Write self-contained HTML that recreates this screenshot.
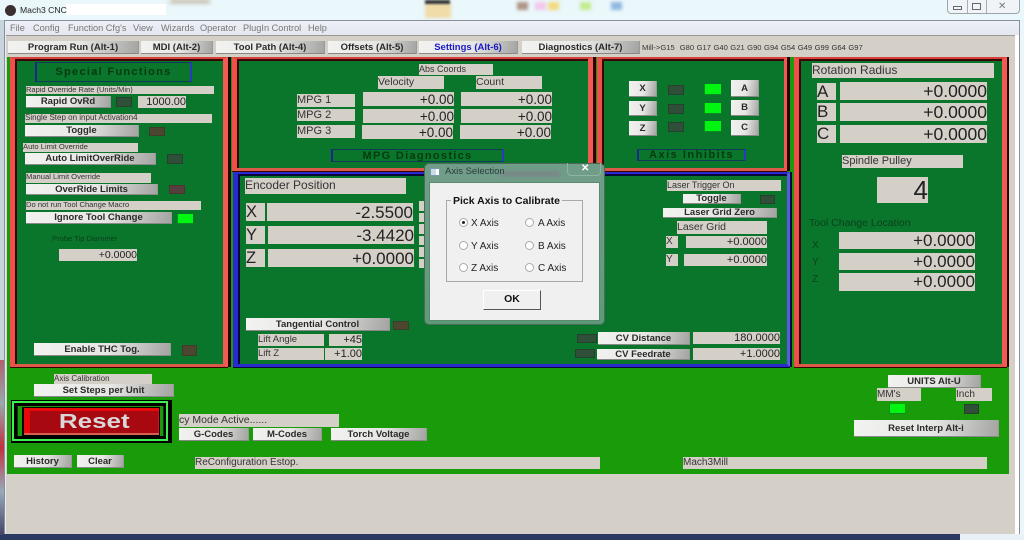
<!DOCTYPE html>
<html><head><meta charset="utf-8"><title>Mach3 CNC</title>
<style>
html,body{margin:0;padding:0;width:1024px;height:540px;overflow:hidden;background:#eef8fb}
#w{position:absolute;left:0;top:0;width:1024px;height:540px;overflow:hidden;filter:blur(.35px);font-family:"Liberation Sans",sans-serif}
#w div,#w span.a{position:absolute;box-sizing:border-box;white-space:nowrap}
.l{background:#d4d0c8;color:#333;overflow:hidden;font-size:11px;line-height:1}
.r{text-align:right;color:#222}
#w .b{background:linear-gradient(100deg,#f2f2f0 0%,#e6e6e4 55%,#a4a4a2 100%);color:#2a2a2a;font-weight:bold;font-size:9.5px;display:flex;align-items:center;justify-content:center;border-bottom:1px solid #888;border-right:1px solid #999}
.o{background:#2f4f38;border:1px solid #26402e}
.n{background:#00f510;border-bottom:1px solid #0a8a20;border-left:1px solid #0a8a20}
.p{background:#0a762c;border-style:solid;border-color:#d8403a #f25a54 #dc5a48 #f0504c;border-width:2px 5px 3px 5px;box-shadow:inset 2px 2px 0 #3a0505,3px 0 0 #2a0000,0 1px 0 #3a0000}
.t{color:#0a3f1c;font-size:9px;line-height:1}
.h{background:#0a762c;color:#063a10;font-weight:bold;text-align:center;font-size:11px;letter-spacing:1.3px;border:1px solid #123a5a;border-left:2px solid #1a2a90;border-right:2px solid #2a3ac0}
.rd{width:9px;height:9px;border-radius:50%;background:#fff;border:1px solid #aaa}
.dl{font-size:10px;color:#222;line-height:1}
</style></head><body><div id="w">

<!-- top desktop strip -->
<div style="left:0;top:0;width:1024px;height:20px;background:#eaf7fb"></div>
<div style="left:170px;top:0;width:40px;height:3px;background:#b8a890;filter:blur(2px)"></div>
<div style="left:425px;top:3px;width:26px;height:15px;background:#f0dca8;filter:blur(1.5px)"></div>
<div style="left:425px;top:0;width:25px;height:4px;background:#333;filter:blur(1px)"></div>
<div style="left:517px;top:2px;width:11px;height:8px;background:#b09488;filter:blur(1.5px)"></div>
<div style="left:535px;top:2px;width:11px;height:8px;background:#f4c8ec;filter:blur(1.5px)"></div>
<div style="left:548px;top:2px;width:11px;height:8px;background:#f2dc80;filter:blur(1.5px)"></div>
<div style="left:580px;top:2px;width:11px;height:8px;background:#c4ec90;filter:blur(1.5px)"></div>
<div style="left:611px;top:2px;width:11px;height:8px;background:#90b8e0;filter:blur(1.5px)"></div>
<div style="left:66px;top:4px;width:100px;height:11px;background:#fff"></div>
<div style="left:5px;top:5px;width:11px;height:11px;border-radius:50%;background:#3a3030"></div>
<div style="left:20px;top:4px;font-size:8.6px;color:#222;line-height:12px">Mach3 CNC</div>
<!-- window buttons -->
<div style="left:947px;top:-1px;width:73px;height:15px;background:#f0f4f6;border:1px solid #9aa6b0;border-radius:0 0 4px 4px"></div>
<div style="left:967px;top:0;width:1px;height:13px;background:#aab"></div>
<div style="left:986px;top:0;width:1px;height:13px;background:#aab"></div>
<div style="left:953px;top:6px;width:9px;height:4px;border:1px solid #667"></div>
<div style="left:972px;top:3px;width:9px;height:7px;border:1px solid #667"></div>
<div style="left:998px;top:1px;font-size:10px;color:#778;line-height:12px">&#10005;</div>

<!-- window frame -->
<div style="left:0;top:20px;width:5px;height:520px;background:#c8d4dc"></div>
<div style="left:4px;top:20px;width:1016px;height:520px;background:#e8eaf2;border:1px solid #8a8f9a;border-bottom:none"></div>
<div style="left:5px;top:21px;width:1014px;height:14px;background:linear-gradient(#eef0f8,#e4e6f0);color:#777;font-size:9.2px;line-height:14px">
<span class="a" style="left:5px">File</span><span class="a" style="left:28px">Config</span><span class="a" style="left:63px">Function Cfg's</span><span class="a" style="left:128px">View</span><span class="a" style="left:156px">Wizards</span><span class="a" style="left:195px">Operator</span><span class="a" style="left:238px">PlugIn Control</span><span class="a" style="left:303px">Help</span></div>
<div style="left:6px;top:35px;width:1009px;height:499px;background:#d4d0c8;border-top:1px solid #999"></div>
<div style="left:1015px;top:35px;width:4px;height:499px;background:#fff"></div>
<div style="left:0;top:534px;width:960px;height:6px;background:#2a3a60"></div>
<div style="left:960px;top:534px;width:64px;height:6px;background:#e8f2f6"></div>
<div style="left:0;top:360px;width:4px;height:175px;background:linear-gradient(#b06070,#9aa,#c03040,#9ab,#446)"></div>
<div style="left:1020px;top:20px;width:4px;height:515px;background:#eaf6fa"></div>

<!-- tabs -->
<div class="b" style="left:8px;top:41px;width:131px;height:13px">Program Run (Alt-1)</div>
<div class="b" style="left:141px;top:41px;width:72px;height:13px">MDI (Alt-2)</div>
<div class="b" style="left:216px;top:41px;width:109px;height:13px">Tool Path (Alt-4)</div>
<div class="b" style="left:328px;top:41px;width:89px;height:13px">Offsets (Alt-5)</div>
<div class="b" style="left:419px;top:41px;width:99px;height:13px;color:#1a1ac8">Settings (Alt-6)</div>
<div class="b" style="left:522px;top:41px;width:118px;height:13px">Diagnostics (Alt-7)</div>
<div style="left:642px;top:43px;font-size:7.6px;color:#333;line-height:9px;word-spacing:.4px">Mill-&gt;G15&nbsp; G80 G17 G40 G21 G90 G94 G54 G49 G99 G64 G97</div>

<!-- bright green base -->
<div style="left:7px;top:57px;width:1002px;height:417px;background:#1a9c0a"></div>

<!-- panels -->
<div class="p" style="left:10px;top:57px;width:218px;height:310px"></div>
<div class="p" style="left:232px;top:57px;width:361px;height:114px"></div>
<div class="p" style="left:597px;top:57px;width:190px;height:114px;border-right-width:3px"></div>
<div class="p" style="left:233px;top:172px;width:557px;height:195px;border-width:2px 3px 3px 5px;border-color:#2a2ad0 #5a5ae0 #2a2ad0 #2a2ad0;box-shadow:inset 2px 2px 0 #08083a,2px 0 0 #08083a,0 1px 0 #08083a"></div>
<div class="p" style="left:794px;top:57px;width:213px;height:310px;box-shadow:inset 2px 2px 0 #3a0505,2px 0 0 #2a0000,0 1px 0 #3a0000"></div>

<!-- panel 1 -->
<div class="h" style="left:35px;top:62px;width:157px;height:20px;line-height:18px">Special Functions</div>
<div class="l" style="left:26px;top:86px;width:188px;height:8px;font-size:7.5px">Rapid Override Rate (Units/Min)</div>
<div class="b" style="left:26px;top:96px;width:85px;height:12px">Rapid OvRd</div>
<div class="o" style="left:116px;top:97px;width:16px;height:10px"></div>
<div class="l r" style="left:138px;top:96px;width:48px;height:12px;font-size:11px;line-height:12px">1000.00</div>
<div class="l" style="left:25px;top:114px;width:187px;height:9px;font-size:8px">Single Step on input Activation4</div>
<div class="b" style="left:25px;top:125px;width:114px;height:12px">Toggle</div>
<div class="o" style="left:149px;top:127px;width:16px;height:9px;background:#4a4630;border-color:#3f3c2a"></div>
<div class="l" style="left:23px;top:143px;width:115px;height:9px;font-size:7.6px">Auto Limit Override</div>
<div class="b" style="left:25px;top:153px;width:131px;height:12px">Auto LimitOverRide</div>
<div class="o" style="left:167px;top:154px;width:16px;height:10px"></div>
<div class="l" style="left:26px;top:173px;width:125px;height:10px;font-size:7.6px">Manual Limit Override</div>
<div class="b" style="left:26px;top:184px;width:132px;height:11px">OverRide Limits</div>
<div class="o" style="left:169px;top:185px;width:16px;height:9px;background:#553f3c;border-color:#4a3533"></div>
<div class="l" style="left:26px;top:201px;width:175px;height:9px;font-size:7.6px">Do not run Tool Change Macro</div>
<div class="b" style="left:26px;top:212px;width:146px;height:12px">Ignore Tool Change</div>
<div class="n" style="left:177px;top:214px;width:16px;height:10px"></div>
<div class="t" style="left:52px;top:235px;font-size:7.6px">Probe Tip Diameter</div>
<div class="l r" style="left:59px;top:249px;width:78px;height:12px;font-size:10.5px;line-height:12px">+0.0000</div>
<div class="b" style="left:34px;top:343px;width:137px;height:13px">Enable THC Tog.</div>
<div class="o" style="left:182px;top:345px;width:15px;height:11px;background:#4a4630;border-color:#3f3c2a"></div>

<!-- panel 2 -->
<div class="l" style="left:419px;top:64px;width:74px;height:11px;font-size:9px;line-height:11px">Abs Coords</div>
<div class="l" style="left:378px;top:76px;width:66px;height:13px;font-size:10.5px;line-height:12px">Velocity</div>
<div class="l" style="left:476px;top:76px;width:66px;height:13px;font-size:10.5px;line-height:12px">Count</div>
<div class="l" style="left:297px;top:94px;width:58px;height:13px;font-size:11px;line-height:12px">MPG 1</div>
<div class="l" style="left:297px;top:109px;width:58px;height:12px;font-size:11px;line-height:12px">MPG 2</div>
<div class="l" style="left:297px;top:125px;width:58px;height:13px;font-size:11px;line-height:12px">MPG 3</div>
<div class="l r" style="left:363px;top:92px;width:91px;height:14px;font-size:13.5px;line-height:15px">+0.00</div>
<div class="l r" style="left:461px;top:92px;width:91px;height:14px;font-size:13.5px;line-height:15px">+0.00</div>
<div class="l r" style="left:363px;top:109px;width:91px;height:14px;font-size:13.5px;line-height:15px">+0.00</div>
<div class="l r" style="left:461px;top:109px;width:91px;height:14px;font-size:13.5px;line-height:15px">+0.00</div>
<div class="l r" style="left:362px;top:125px;width:91px;height:14px;font-size:13.5px;line-height:15px">+0.00</div>
<div class="l r" style="left:460px;top:125px;width:91px;height:14px;font-size:13.5px;line-height:15px">+0.00</div>
<div class="h" style="left:331px;top:149px;width:173px;height:13px;line-height:12px">MPG Diagnostics</div>

<!-- panel 3 -->
<div class="b" style="left:629px;top:81px;width:28px;height:16px">X</div>
<div class="b" style="left:629px;top:101px;width:28px;height:15px">Y</div>
<div class="b" style="left:629px;top:121px;width:28px;height:15px">Z</div>
<div class="o" style="left:668px;top:85px;width:16px;height:10px"></div>
<div class="o" style="left:668px;top:104px;width:16px;height:10px"></div>
<div class="o" style="left:668px;top:122px;width:16px;height:10px"></div>
<div class="n" style="left:704px;top:84px;width:17px;height:11px"></div>
<div class="n" style="left:704px;top:103px;width:17px;height:11px"></div>
<div class="n" style="left:704px;top:121px;width:17px;height:11px"></div>
<div class="b" style="left:731px;top:80px;width:28px;height:17px">A</div>
<div class="b" style="left:731px;top:100px;width:28px;height:16px">B</div>
<div class="b" style="left:731px;top:120px;width:28px;height:16px">C</div>
<div class="h" style="left:637px;top:149px;width:109px;height:12px;line-height:11px;letter-spacing:1.5px">Axis Inhibits</div>

<!-- panel 5 -->
<div class="l" style="left:812px;top:63px;width:182px;height:15px;font-size:12px;line-height:15px">Rotation Radius</div>
<div class="l" style="left:817px;top:83px;width:19px;height:17px;font-size:17px;line-height:17px;color:#222">A</div>
<div class="l r" style="left:840px;top:82px;width:147px;height:18px;font-size:17.5px;line-height:19px">+0.0000</div>
<div class="l" style="left:817px;top:103px;width:19px;height:18px;font-size:17px;line-height:18px;color:#222">B</div>
<div class="l r" style="left:840px;top:103px;width:147px;height:18px;font-size:17.5px;line-height:19px">+0.0000</div>
<div class="l" style="left:817px;top:125px;width:19px;height:18px;font-size:17px;line-height:18px;color:#222">C</div>
<div class="l r" style="left:840px;top:125px;width:147px;height:18px;font-size:17.5px;line-height:19px">+0.0000</div>
<div class="l" style="left:842px;top:155px;width:121px;height:13px;font-size:11px;line-height:13px">Spindle Pulley</div>
<div class="l r" style="left:877px;top:177px;width:51px;height:26px;font-size:26px;line-height:27px">4</div>
<div class="t" style="left:809px;top:218px;font-size:10.5px">Tool Change Location</div>
<div class="t" style="left:812px;top:241px;font-size:10px">X</div>
<div class="t" style="left:812px;top:258px;font-size:10px">Y</div>
<div class="t" style="left:812px;top:275px;font-size:10px">Z</div>
<div class="l r" style="left:839px;top:232px;width:136px;height:17px;font-size:17px;line-height:18px">+0.0000</div>
<div class="l r" style="left:839px;top:253px;width:136px;height:17px;font-size:17px;line-height:18px">+0.0000</div>
<div class="l r" style="left:839px;top:273px;width:136px;height:18px;font-size:17px;line-height:18px">+0.0000</div>

<!-- panel 4 -->
<div class="l" style="left:245px;top:178px;width:161px;height:16px;font-size:12px;line-height:15px">Encoder Position</div>
<div class="l" style="left:246px;top:203px;width:19px;height:18px;font-size:16.5px;line-height:18px;color:#222">X</div>
<div class="l r" style="left:267px;top:203px;width:146px;height:18px;font-size:17px;line-height:19px">-2.5500</div>
<div class="l" style="left:246px;top:226px;width:19px;height:18px;font-size:16.5px;line-height:18px;color:#222">Y</div>
<div class="l r" style="left:268px;top:226px;width:146px;height:18px;font-size:17px;line-height:19px">-3.4420</div>
<div class="l" style="left:246px;top:249px;width:19px;height:18px;font-size:16.5px;line-height:18px;color:#222">Z</div>
<div class="l r" style="left:268px;top:249px;width:146px;height:18px;font-size:17px;line-height:19px">+0.0000</div>
<div class="l" style="left:419px;top:201px;width:8px;height:10px"></div>
<div class="l" style="left:419px;top:213px;width:8px;height:9px"></div>
<div class="l" style="left:419px;top:224px;width:8px;height:10px"></div>
<div class="l" style="left:419px;top:236px;width:8px;height:9px"></div>
<div class="l" style="left:419px;top:247px;width:8px;height:10px"></div>
<div class="l" style="left:419px;top:259px;width:8px;height:9px"></div>
<div class="b" style="left:246px;top:318px;width:144px;height:13px">Tangential Control</div>
<div class="o" style="left:393px;top:321px;width:16px;height:9px;background:#4a4630;border-color:#3f3c2a"></div>
<div class="l" style="left:258px;top:334px;width:66px;height:12px;font-size:9.5px;line-height:12px">Lift Angle</div>
<div class="l r" style="left:329px;top:334px;width:33px;height:12px;font-size:11px;line-height:12px">+45</div>
<div class="l" style="left:258px;top:348px;width:66px;height:12px;font-size:9.5px;line-height:12px">Lift Z</div>
<div class="l r" style="left:325px;top:348px;width:37px;height:12px;font-size:11px;line-height:12px">+1.00</div>
<div class="o" style="left:577px;top:334px;width:20px;height:9px"></div>
<div class="b" style="left:598px;top:332px;width:92px;height:13px">CV Distance</div>
<div class="o" style="left:575px;top:349px;width:20px;height:9px"></div>
<div class="b" style="left:597px;top:349px;width:93px;height:11px">CV Feedrate</div>
<div class="l r" style="left:693px;top:332px;width:87px;height:12px;font-size:11px;line-height:12px">180.0000</div>
<div class="l r" style="left:693px;top:348px;width:87px;height:12px;font-size:11px;line-height:12px">+1.0000</div>
<div class="l" style="left:667px;top:180px;width:114px;height:11px;font-size:9px;line-height:11px">Laser Trigger On</div>
<div class="b" style="left:683px;top:194px;width:58px;height:10px">Toggle</div>
<div class="o" style="left:760px;top:195px;width:15px;height:9px"></div>
<div class="b" style="left:663px;top:208px;width:114px;height:10px">Laser Grid Zero</div>
<div class="l" style="left:677px;top:221px;width:90px;height:13px;font-size:10.5px;line-height:13px">Laser Grid</div>
<div class="l" style="left:666px;top:236px;width:12px;height:12px;font-size:10px;line-height:12px">X</div>
<div class="l r" style="left:686px;top:236px;width:81px;height:12px;font-size:11px;line-height:12px">+0.0000</div>
<div class="l" style="left:666px;top:254px;width:12px;height:12px;font-size:10px;line-height:12px">Y</div>
<div class="l r" style="left:684px;top:254px;width:83px;height:12px;font-size:11px;line-height:12px">+0.0000</div>

<!-- bottom -->
<div class="l" style="left:54px;top:374px;width:98px;height:10px;font-size:8px;line-height:10px">Axis Calibration</div>
<div class="b" style="left:34px;top:384px;width:140px;height:13px">Set Steps per Unit</div>
<div style="left:11px;top:400px;width:161px;height:43px;background:#000"></div>
<div style="left:12px;top:401px;width:156px;height:40px;border:2px solid #3cf050"></div>
<div style="left:16px;top:405px;width:149px;height:32px;background:#063a10;border:1px solid #000"></div>
<div style="left:18px;top:406px;width:145px;height:30px;background:#1a9c0a"></div>
<div style="left:22px;top:407px;width:138px;height:29px;background:#000"></div>
<div style="left:24px;top:408px;width:135px;height:27px;background:#e80a0a;border-bottom:2px solid #d86050"></div>
<div style="left:30px;top:411px;width:128px;height:22px;background:#a80810;color:#d8d8d8;font-size:20px;font-weight:bold;text-align:center;line-height:22px;overflow:hidden"><span style="display:inline-block;transform:scaleX(1.3)">Reset</span></div>
<div class="l" style="left:179px;top:414px;width:160px;height:13px;font-size:10.5px;line-height:12px">cy Mode Active......</div>
<div class="b" style="left:179px;top:428px;width:70px;height:13px">G-Codes</div>
<div class="b" style="left:253px;top:428px;width:69px;height:13px">M-Codes</div>
<div class="b" style="left:331px;top:428px;width:96px;height:13px">Torch Voltage</div>
<div class="b" style="left:14px;top:455px;width:58px;height:13px">History</div>
<div class="b" style="left:77px;top:455px;width:47px;height:13px">Clear</div>
<div class="l" style="left:195px;top:457px;width:405px;height:12px;font-size:10px;line-height:12px">ReConfiguration Estop.</div>
<div class="l" style="left:683px;top:457px;width:304px;height:12px;font-size:10px;line-height:12px">Mach3Mill</div>
<div class="b" style="left:888px;top:375px;width:93px;height:13px">UNITS Alt-U</div>
<div class="l" style="left:877px;top:388px;width:44px;height:13px;font-size:10px;line-height:13px">MM's</div>
<div class="l" style="left:956px;top:388px;width:36px;height:13px;font-size:10px;line-height:13px">Inch</div>
<div class="n" style="left:889px;top:404px;width:16px;height:10px"></div>
<div class="o" style="left:964px;top:404px;width:15px;height:10px"></div>
<div class="b" style="left:854px;top:420px;width:145px;height:17px">Reset Interp Alt-i</div>

<!-- dialog -->
<div style="left:424px;top:163px;width:181px;height:162px;background:linear-gradient(#6f9d88 0,#6f9d88 20px,#5f9a78 100%);border:1px solid #4a6a5a;border-radius:5px"></div>
<div style="left:500px;top:172px;width:60px;height:4px;background:#8a5f8a;opacity:.5;filter:blur(2px)"></div>
<div style="left:567px;top:163px;width:34px;height:13px;border:1px solid #8fb5a2;border-top:none;border-radius:0 0 4px 4px"></div>
<div style="left:581px;top:163px;font-size:10px;font-weight:bold;color:#fff;line-height:12px">&#10005;</div>
<div style="left:430px;top:168px;width:10px;height:8px;background:linear-gradient(90deg,#c8dce8 60%,#fff 60%);border:1px solid #7a9aa8"></div>
<div style="left:445px;top:166px;font-size:9.5px;color:#2a3a3a;line-height:12px">Axis Selection</div>
<div style="left:429px;top:182px;width:171px;height:139px;background:#f0f0f0;border:1px solid #5a8a70"></div>
<div style="left:446px;top:200px;width:137px;height:82px;border:1px solid #a8a8a8"></div>
<div style="left:451px;top:195px;background:#f0f0f0;padding:0 2px;font-size:10.5px;font-weight:bold;color:#111;line-height:13px">Pick Axis to Calibrate</div>
<div class="rd" style="left:459px;top:218px"></div><div style="left:462px;top:221px;width:3px;height:3px;border-radius:50%;background:#222"></div>
<div class="rd" style="left:459px;top:241px"></div>
<div class="rd" style="left:459px;top:263px"></div>
<div class="rd" style="left:525px;top:218px"></div>
<div class="rd" style="left:525px;top:241px"></div>
<div class="rd" style="left:525px;top:263px"></div>
<div class="dl" style="left:471px;top:219px">X Axis</div>
<div class="dl" style="left:471px;top:242px">Y Axis</div>
<div class="dl" style="left:471px;top:264px">Z Axis</div>
<div class="dl" style="left:538px;top:219px">A Axis</div>
<div class="dl" style="left:538px;top:242px">B Axis</div>
<div class="dl" style="left:538px;top:264px">C Axis</div>
<div style="left:483px;top:290px;width:58px;height:20px;background:#f0f0f0;border:1px solid;border-color:#fff #555 #555 #fff;font-size:10.5px;font-weight:bold;text-align:center;line-height:17px;color:#111">OK</div>

</div></body></html>
